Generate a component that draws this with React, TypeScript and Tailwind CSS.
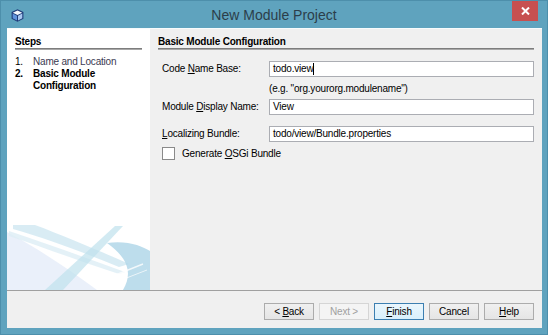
import React from 'react';

const ui = "font-['Liberation_Sans',sans-serif] text-[10px] leading-[12px] tracking-[-0.2px] whitespace-nowrap";

const Mn: React.FC<{ children: React.ReactNode }> = ({ children }) => (
    <span className="underline underline-offset-[1px]">{children}</span>
);

const Field: React.FC<{ value: string; caret?: boolean }> = ({ value, caret }) => (
    <div className="h-[16px] flex-1 bg-white border border-[#abadb3] flex items-center pl-[3px] text-[#000]">
        <span>{value}</span>
        {caret && <span className="w-px h-[12px] bg-black" />}
    </div>
);

const Btn: React.FC<{ children: React.ReactNode; kind?: 'normal' | 'default' | 'disabled' }> = ({ children, kind = 'normal' }) => (
    <div
        className={`w-[50px] h-[17px] flex items-center justify-center border ${kind === 'default'
            ? 'border-[#3c7fb1] bg-gradient-to-b from-[#eaf6fd] to-[#d9f0fc] text-black'
            : kind === 'disabled'
                ? 'border-[#d5d5d5] bg-[#f4f4f4] text-[#a0a0a0]'
                : 'border-[#acacac] bg-gradient-to-b from-[#f0f0f0] to-[#e5e5e5] text-black'
            }`}
    >
        {children}
    </div>
);

const Swoosh: React.FC = () => (
    <svg width="143" height="72" viewBox="0 0 143 72" className="block">
        <path d="M0 14 C30 30 60 50 90 72 L0 72 Z" fill="#e8eef9" opacity="0.9" />
        <path d="M6 7 L28 7 C60 19 95 34 122 46 L112 49 C85 38 45 22 6 11 Z" fill="#cfe7f1" opacity="0.8" />
        <path d="M2 13 C40 26 80 40 118 54 L112 56 C75 44 38 30 2 18 Z" fill="#ddeef5" opacity="0.8" />
        <path d="M108 8 L116 8 L56 72 L38 72 Z" fill="#bfe1ed" opacity="0.7" />
        <path d="M100 25 C120 22 135 28 143 33 L143 72 L116 72 C126 55 121 40 100 25 Z" fill="#add5e7" opacity="0.8" />
        <path d="M96 62 L136 46" stroke="#ffffff" strokeWidth="1.5" opacity="0.8" />
        <path d="M104 66 L140 52" stroke="#ffffff" strokeWidth="1" opacity="0.7" />
    </svg>
);

export default function App() {
    return (
        <div className={`w-[548px] h-[335px] bg-[#5fa3be] border border-[#4d8fab] flex flex-col ${ui}`}>
            {/* title bar */}
            <div className="h-[27px] relative flex items-center justify-center">
                <svg width="13" height="13" viewBox="0 0 13 13" className="absolute left-[10px] top-[8px]">
                    <path d="M6.5 0.3 L12.4 3.1 L12.4 9.8 L6.5 12.8 L0.6 9.8 L0.6 3.1 Z" fill="#1d3a78" />
                    <path d="M6.5 1.5 L11.2 3.7 L6.5 6 L1.8 3.7 Z" fill="#f4f8fd" />
                    <path d="M1.7 4.6 L6 6.8 L6 11.5 L1.7 9.2 Z" fill="#5f93dc" />
                    <path d="M7 6.8 L11.3 4.6 L11.3 9.2 L7 11.5 Z" fill="#a8c7f0" />
                </svg>
                <span className="font-['Liberation_Sans',sans-serif] text-[14px] leading-[18px] tracking-normal text-[#2c3e4a] mt-[1px]">New Module Project</span>
                <div className="absolute right-[9px] top-0 w-[26px] h-[20px] bg-[#c75050] flex items-center justify-center">
                    <svg width="9" height="8" viewBox="0 0 9 8">
                        <path d="M1 0.5 L8 7.5 M8 0.5 L1 7.5" stroke="#ffffff" strokeWidth="2" />
                    </svg>
                </div>
            </div>

            {/* content */}
            <div className="ml-[6px] mr-[5px] mb-[6px] flex-1 flex flex-col bg-[#f0f0f0] border-t border-[#f7fbfc]">
                <div className="flex flex-1 min-h-0">
                    {/* steps */}
                    <div className="w-[143px] bg-white flex flex-col">
                        <div className="pl-[8px] pr-[8px] pt-[7px]">
                            <div className="font-bold text-black">Steps</div>
                            <div className="h-[2px] bg-[#7d7d7d] border-b border-[#a8a8a8]" />
                            <div className="mt-[6px] flex">
                                <span className="w-[18px] text-black">1.</span>
                                <span className="text-[#3a3a52]">Name and Location</span>
                            </div>
                            <div className="flex font-bold text-black">
                                <span className="w-[18px]">2.</span>
                                <span>Basic Module<br />Configuration</span>
                            </div>
                        </div>
                        <div className="mt-auto">
                            <Swoosh />
                        </div>
                    </div>

                    {/* form */}
                    <div className="flex-1 pl-[8px] pr-[8px] pt-[7px]">
                        <div className="font-bold text-black">Basic Module Configuration</div>
                        <div className="h-[2px] bg-[#7d7d7d] border-b border-[#a8a8a8]" />

                        <div className="pl-[4px] mt-[11px] text-black">
                            <div className="flex items-center">
                                <span className="w-[107px]">Code <Mn>N</Mn>ame Base:</span>
                                <Field value="todo.view" caret />
                            </div>
                            <div className="pl-[107px] mt-[6px]">(e.g. "org.yourorg.modulename")</div>
                            <div className="flex items-center mt-[4px]">
                                <span className="w-[107px]">Module <Mn>D</Mn>isplay Name:</span>
                                <Field value="View" />
                            </div>
                            <div className="flex items-center mt-[11px]">
                                <span className="w-[107px]"><Mn>L</Mn>ocalizing Bundle:</span>
                                <Field value="todo/view/Bundle.properties" />
                            </div>
                            <div className="flex items-center mt-[5px]">
                                <div className="w-[13px] h-[13px] bg-white border border-[#8a8a8a]" />
                                <span className="ml-[7px]">Generate <Mn>O</Mn>SGi Bundle</span>
                            </div>
                        </div>
                    </div>
                </div>

                {/* buttons */}
                <div className="h-[38px] border-t border-[#a0a0a0] flex items-start justify-end gap-[5px] pt-[12px] pr-[8px]">
                    <Btn>&lt;&nbsp;<Mn>B</Mn>ack</Btn>
                    <Btn kind="disabled">Next &gt;</Btn>
                    <Btn kind="default"><Mn>F</Mn>inish</Btn>
                    <Btn>Cancel</Btn>
                    <Btn><Mn>H</Mn>elp</Btn>
                </div>
            </div>
        </div>
    );
}
